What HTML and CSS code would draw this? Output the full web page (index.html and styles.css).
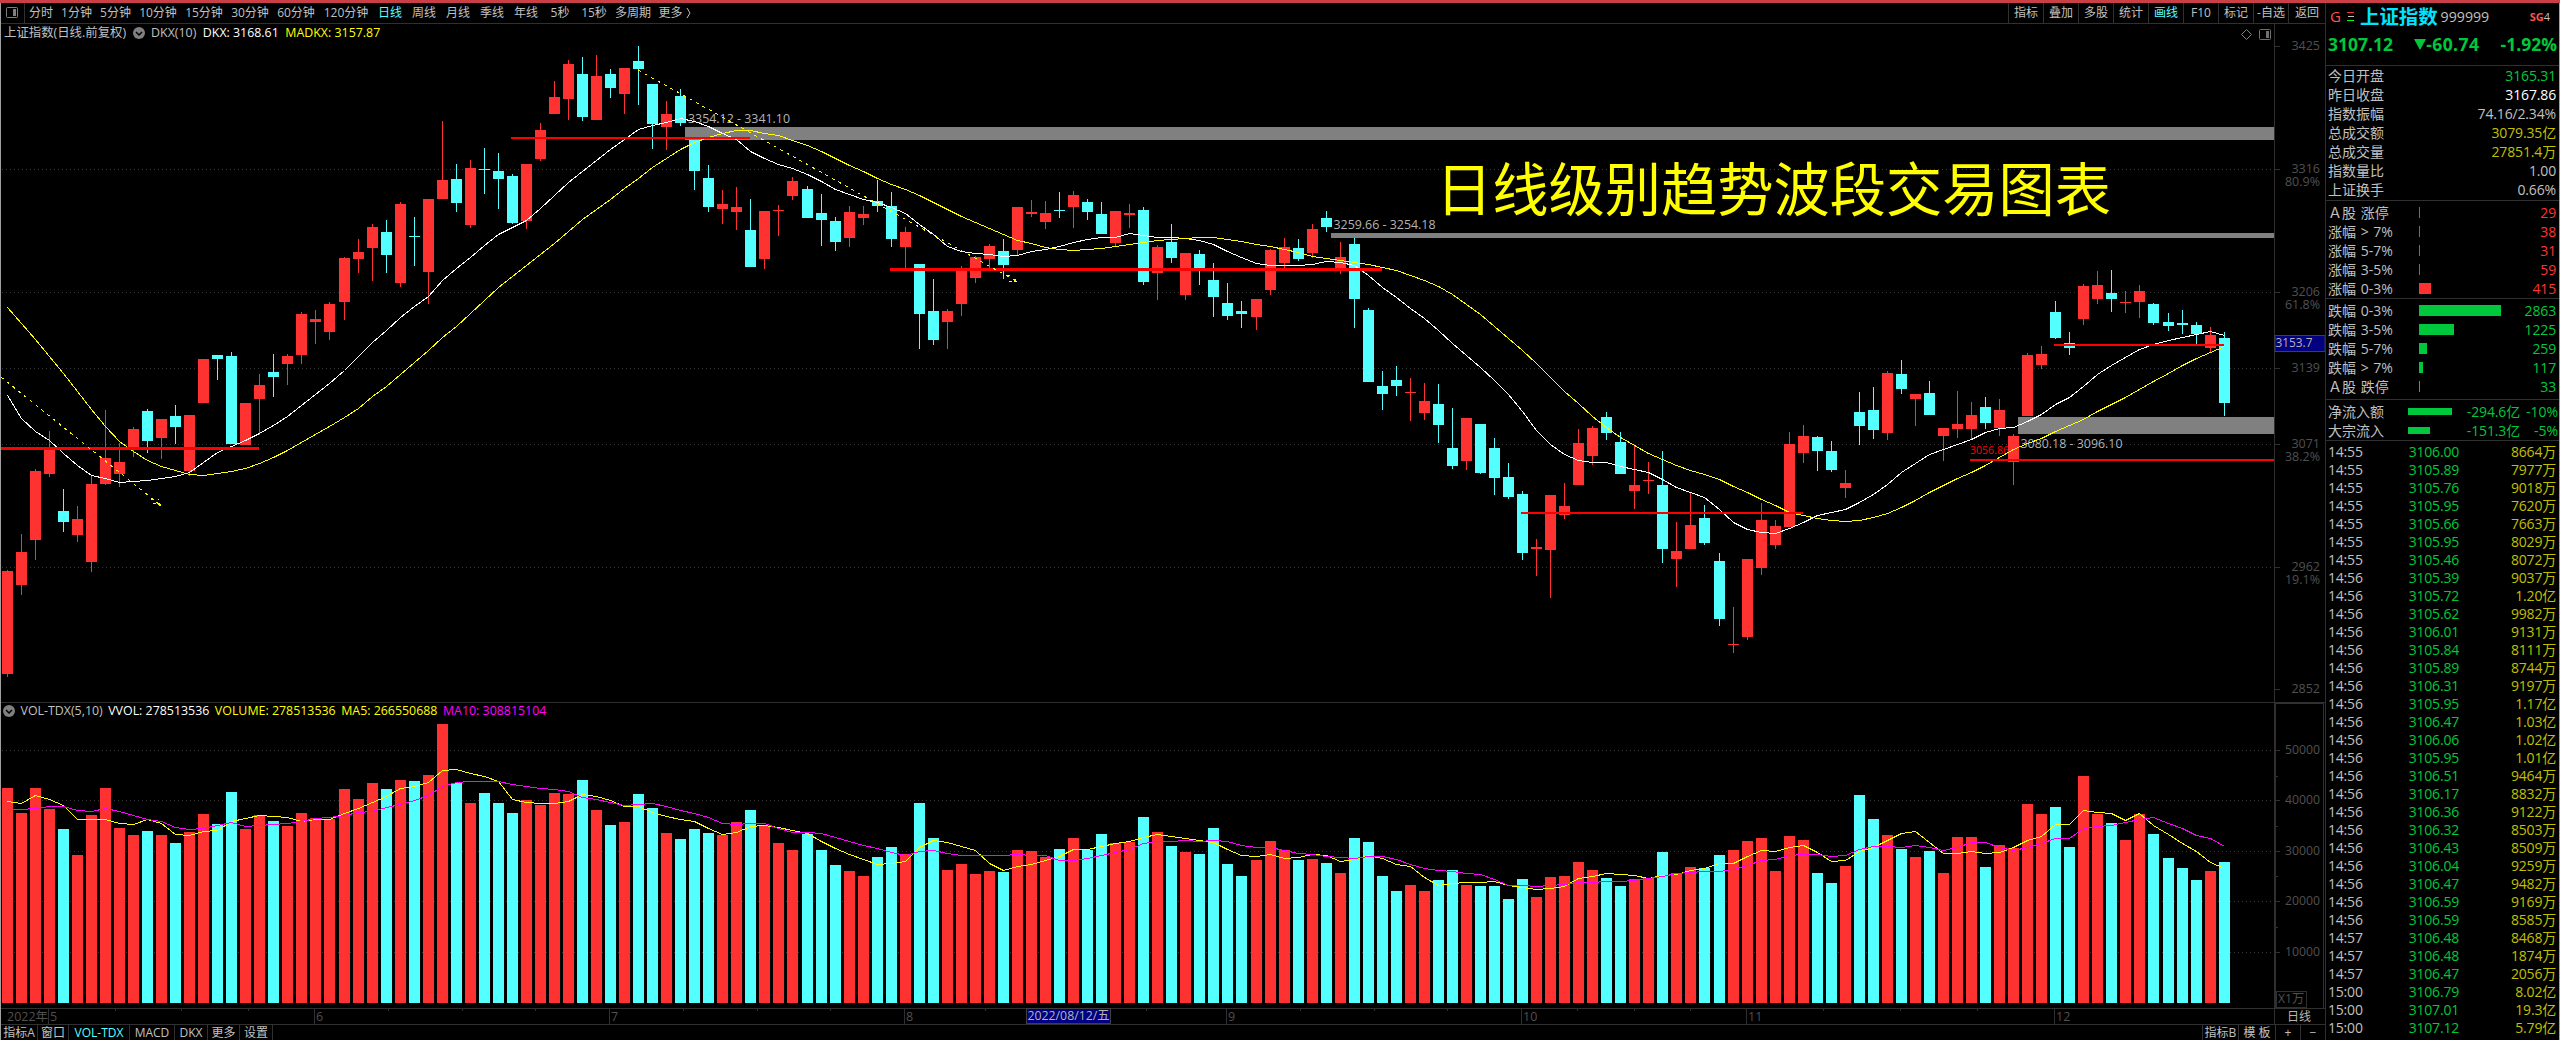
FILE: index.html
```html
<!DOCTYPE html>
<html lang="zh-CN">
<head>
    <meta charset="UTF-8">
    <title>上证指数 999999</title>
    <link rel="stylesheet" href="styles.css">
</head>
<body>
    <div class="main">
        <div class="toolbar">
            <div class="layout-icon">
                <svg width="12" height="12" viewBox="0 0 12 12"><rect x="0.5" y="0.5" width="11" height="10" rx="1" fill="none" stroke="#808080"/><rect x="7" y="2" width="3" height="7" fill="#808080"/></svg>
            </div>
            <div class="periods">
                <span>分时</span>
                <span>1分钟</span>
                <span>5分钟</span>
                <span>10分钟</span>
                <span>15分钟</span>
                <span>30分钟</span>
                <span>60分钟</span>
                <span>120分钟</span>
                <span class="active">日线</span>
                <span>周线</span>
                <span>月线</span>
                <span>季线</span>
                <span>年线</span>
                <span>5秒</span>
                <span>15秒</span>
                <span>多周期</span>
                <span>更多</span>
                <svg width="5" height="12" viewBox="0 0 5 12"><path d="M1 1 L4 6 L1 11" fill="none" stroke="#c0c0c0"/></svg>
            </div>
            <div class="tools">
                <span>指标</span>
                <span>叠加</span>
                <span>多股</span>
                <span>统计</span>
                <span class="active">画线</span>
                <span>F10</span>
                <span>标记</span>
                <span>-自选</span>
                <span>返回</span>
            </div>
        </div>

        <div class="panel price-panel">
            <div class="info">
                <span class="title">上证指数(日线.前复权)</span>
                <svg class="drop" width="12" height="12" viewBox="0 0 12 12"><circle cx="6" cy="6" r="6" fill="#808080"/><path d="M3 5 L6 8 L9 5" fill="none" stroke="#000" stroke-width="1.5"/></svg>
                <span>DKX(10)</span>
                <span class="white">DKX: 3168.61</span>
                <span class="yellow">MADKX: 3157.87</span>
                <div class="info-icons">
                    <svg width="11" height="11" viewBox="0 0 11 11"><path d="M5.5 0.5 L10.5 5.5 L5.5 10.5 L0.5 5.5 Z" fill="none" stroke="#808080"/></svg>
                    <svg width="12" height="11" viewBox="0 0 12 11"><rect x="0.5" y="0.5" width="11" height="10" rx="1" fill="none" stroke="#707070"/><rect x="7" y="2" width="3" height="7" fill="#707070"/></svg>
                </div>
            </div>
            <svg id="price" width="2324" height="661" viewBox="1 41 2324 661"></svg>
        </div>

        <div class="panel vol-panel">
            <div class="info">
                <svg class="drop" width="12" height="12" viewBox="0 0 12 12"><circle cx="6" cy="6" r="6" fill="#808080"/><path d="M3 5 L6 8 L9 5" fill="none" stroke="#000" stroke-width="1.5"/></svg>
                <span>VOL-TDX(5,10)</span>
                <span class="white">VVOL: 278513536</span>
                <span class="yellow">VOLUME: 278513536</span>
                <span class="yellow">MA5: 266550688</span>
                <span class="magenta">MA10: 308815104</span>
            </div>
            <svg id="volume" width="2324" height="305" viewBox="1 720 2324 305"></svg>
        </div>

        <div class="footer">
            <div class="indicators">
                <span>指标A</span>
                <span>窗口</span>
                <span class="active">VOL-TDX</span>
                <span>MACD</span>
                <span>DKX</span>
                <span>更多</span>
                <span>设置</span>
            </div>
            <div class="templates">
                <span>指标B</span>
                <span>模 板</span>
                <span>+</span>
                <span>−</span>
            </div>
        </div>
    </div>

    <div class="side">
        <div class="quote">
            <div class="quote-name">
                <span class="flag">G</span>
                <svg width="8" height="10" viewBox="0 0 8 10"><path d="M0 0.5 H7" stroke="#ff3232"/><path d="M1 4.5 H7" stroke="#c0c0c0"/><path d="M0 8.5 H7" stroke="#00ff00"/></svg>
                <span class="name">上证指数</span>
                <span class="code">999999</span>
                <span class="sg"><b>SG</b>4</span>
            </div>
            <div class="quote-price">
                <span>3107.12</span>
                <span class="change"><svg width="12" height="11" viewBox="0 0 12 11"><path d="M0 0 H12 L6 11 Z" fill="#00c83c"/></svg>-60.74</span>
                <span class="pct">-1.92%</span>
            </div>
        </div>
        <div class="block summary" id="summary"></div>
        <div class="block" id="up"></div>
        <div class="block down" id="down"></div>
        <div class="block flow" id="flow"></div>
        <div class="ticks" id="ticks"></div>
    </div>

    <script src="chart.js"></script>
</body>
</html>
```
FILE: styles.css
```css
* {
    box-sizing: border-box;
}

body {
    margin: 0;
    width: 2560px;
    height: 1040px;
    overflow: hidden;
    display: flex;
    background-color: #000;
    border-top: 3px solid #c84046;
    color: #c0c0c0;
    font-family: "Open Sans", "Noto Sans CJK SC", sans-serif;
    font-size: 12px;
    white-space: nowrap;
}

svg {
    display: block;
    overflow: visible;
}

.active {
    color: #54ffff;
}

.white {
    color: #fff;
}

.yellow {
    color: #ff0;
}

.magenta {
    color: #f0f;
}

.main {
    width: 2325px;
    border-left: 1px solid #a0a0a0;
    display: flex;
    flex-direction: column;
}

/* 顶部工具栏 */
.toolbar {
    height: 21px;
    border-bottom: 1px solid #303030;
    display: flex;
    line-height: 20px;
}

.layout-icon {
    width: 24px;
    padding: 4px 0 0 5px;
    border-right: 1px solid #303030;
}

.periods {
    display: grid;
    grid-template-columns: 32px 39px 39px repeat(4, 46px) 54px repeat(7, 34px) 44px 31px 8px;
    text-align: center;
    align-items: center;
}

.tools {
    display: flex;
    margin-left: auto;
}

.tools span {
    width: 35px;
    border-left: 1px solid #303030;
    text-align: center;
}

.tools span:last-child {
    width: 37px;
}

/* 图表区 */
.price-panel {
    height: 678px;
}

.vol-panel {
    height: 323px;
    border-top: 1px solid #303030;
}

.info {
    width: 2274px;
    height: 17px;
    padding-left: 3px;
    border-right: 1px solid #303030;
    display: flex;
    align-items: center;
    gap: 6.5px;
    font-size: 12.4px;
    line-height: 17px;
}

.vol-panel .info {
    gap: 5.5px;
    padding: 0 0 2px 2px;
}

.info-icons {
    display: flex;
    gap: 7px;
    margin: 3px 3px 0 auto;
}

.grid {
    stroke: #383838;
    stroke-dasharray: 1 3;
}

.frame {
    stroke: #303030;
    fill: none;
}

.axis-text {
    fill: #505050;
    font-size: 12.5px;
}

.mark-text {
    fill: #b4b4b4;
    font-size: 12.5px;
}

.stop-text {
    fill: #f00;
    font-size: 10px;
}

.headline {
    fill: #ff0;
    font-size: 58px;
    font-family: "Noto Sans CJK SC", sans-serif;
}

.rise {
    fill: #ff3232;
}

.fall {
    fill: #54ffff;
}

.gap {
    fill: #808080;
}

.level {
    fill: #f00;
}

.line {
    fill: none;
    stroke-width: 1;
}

.trend {
    fill: none;
    stroke: #ff0;
    stroke-dasharray: 3 4.4;
}

/* 底部 */
.footer {
    height: 15px;
    display: flex;
    line-height: 15px;
    text-align: center;
}

.indicators {
    display: grid;
    grid-template-columns: 37px 31px 61px 45px 33px 32px 33px;
}

.indicators span {
    border-right: 1px solid #303030;
}

.templates {
    display: grid;
    grid-template-columns: 36px 37px 25px 25px;
    margin-left: auto;
}

.templates span {
    border-left: 1px solid #303030;
}

/* 右侧行情 */
.side {
    width: 235px;
    border-left: 1px solid #303030;
    border-right: 1px solid #a0a0a0;
    font-size: 14px;
}

.quote {
    height: 63px;
    border-bottom: 1px solid #303030;
}

.quote-name {
    height: 27px;
    padding: 0 9px 0 4px;
    display: flex;
    align-items: center;
    line-height: 27px;
}

.flag {
    width: 17px;
    color: #ff5050;
    font-size: 15px;
}

.name {
    margin-left: 5px;
    color: #00e4ff;
    font-size: 19.4px;
    font-weight: bold;
}

.code {
    margin-left: 3px;
    font-size: 14.2px;
}

.sg {
    margin-left: auto;
    font-size: 11px;
}

.sg b {
    color: #ff5050;
}

.quote-price {
    padding: 0 2px;
    display: flex;
    justify-content: space-between;
    color: #00c83c;
    font-size: 17.5px;
    font-weight: bold;
    line-height: 28px;
}

.change {
    display: flex;
    align-items: center;
    letter-spacing: 0.4px;
}

.block {
    padding: 2px 3px 0 2px;
    border-bottom: 1px solid #303030;
}

.summary {
    padding-top: 0;
    padding-bottom: 1px;
}

.down {
    padding-bottom: 3px;
}

.row {
    height: 19px;
    display: flex;
    align-items: center;
    line-height: 19px;
}

.row .label {
    width: 91px;
    word-spacing: 1px;
}

.row .bar {
    height: 11px;
}

.row .value {
    margin-left: auto;
    letter-spacing: -0.15px;
}

.flow {
    padding-right: 1px;
}

.flow .label {
    width: 80px;
}

.flow .bar {
    height: 7px;
}

.flow .rate {
    width: 38px;
    text-align: right;
}

.up-color {
    color: #ff3232;
}

.down-color {
    color: #00c83c;
}

.amount-color {
    color: #c0c000;
}

.up-bar {
    background-color: #ff3232;
}

.down-bar {
    background-color: #00c83c;
}

.ticks {
    padding: 2px 3px 0 2px;
}

.tick {
    height: 18px;
    display: grid;
    grid-template-columns: 60px 71px 1fr;
    line-height: 18px;
    letter-spacing: -0.2px;
}

.tick span + span {
    text-align: right;
}
```
FILE: chart.js
```js
// [涨跌, 最高, 实体上沿, 实体下沿, 最低]
var candles = [
    [1,570,571,674,677],[1,534,552,585,595],[1,469,471,540,560],[1,431,449,474,477],[0,489,511,522,532],
    [1,506,519,535,542],[1,476,484,562,572],[1,410,458,484,485],[1,443,462,474,487],[1,427,429,448,457],
    [0,409,411,441,453],[1,419,419,438,459],[0,405,416,427,444],[1,415,415,471,476],[1,359,359,403,403],
    [0,355,355,359,380],[0,352,356,444,444],[1,403,403,445,445],[1,374,385,399,435],[0,354,372,377,397],
    [1,354,356,364,385],[1,312,314,355,364],[1,310,319,322,344],[1,302,304,332,340],[1,257,258,302,320],
    [1,239,252,259,273],[1,224,227,248,281],[0,220,232,255,273],[1,202,204,283,287],[0,217,236,237,266],
    [1,199,199,272,304],[1,121,180,199,199],[0,164,179,203,212],[1,160,168,225,228],[0,148,169,170,194],
    [0,153,171,179,209],[0,174,176,223,224],[1,164,164,221,229],[1,123,130,159,161],[1,81,97,114,114],
    [1,60,64,99,120],[0,57,74,117,121],[1,55,76,120,120],[0,69,74,88,98],[1,68,68,94,114],
    [0,46,61,69,105],[0,84,84,124,149],[1,101,114,127,150],[0,89,96,123,126],[0,140,140,171,190],
    [0,165,178,207,212],[1,190,204,209,224],[1,187,207,212,230],[0,199,230,267,267],[1,211,211,259,269],
    [1,205,210,211,236],[1,177,181,196,200],[0,186,189,218,218],[0,194,213,220,246],[0,217,221,242,251],
    [1,206,212,238,247],[1,206,214,218,225],[0,180,201,206,212],[0,192,206,239,247],[1,227,232,247,269],
    [0,264,264,314,349],[0,279,311,340,345],[1,309,311,322,349],[1,266,270,304,316],[1,256,257,278,283],
    [1,244,246,259,269],[0,239,251,265,279],[1,207,207,250,256],[1,200,212,214,217],[1,201,213,222,229],
    [0,192,210,211,218],[1,191,195,207,228],[0,199,202,212,220],[0,202,214,234,234],[1,211,211,243,246],
    [1,204,213,215,228],[0,207,210,282,285],[1,245,247,273,300],[0,224,242,258,263],[1,253,253,295,300],
    [0,250,254,268,285],[0,263,280,297,317],[0,283,303,316,320],[0,301,311,314,328],[1,299,299,317,330],
    [1,249,250,290,295],[1,238,247,263,269],[0,239,248,259,261],[1,224,229,253,258],[0,211,218,227,232],
    [1,242,257,269,274],[0,238,244,299,328],[0,308,310,382,382],[0,371,386,394,410],[0,366,380,386,396],
    [1,378,392,393,421],[1,383,401,413,420],[0,384,404,425,443],[0,408,448,466,469],[1,418,418,461,470],
    [0,424,424,473,474],[0,438,448,478,495],[0,463,477,497,499],[0,491,494,553,560],[1,539,547,549,576],
    [1,495,495,550,598],[1,483,506,515,519],[1,429,443,485,485],[1,426,428,456,465],[0,412,417,433,440],
    [0,432,442,474,474],[1,445,485,491,509],[1,462,480,481,494],[0,451,485,549,563],[1,522,551,559,587],
    [1,493,525,549,549],[0,505,518,543,545],[0,553,561,619,626],[1,607,644,645,653],[1,559,559,637,640],
    [1,503,520,568,575],[1,520,526,545,549],[1,432,444,527,527],[1,425,436,453,463],[0,436,437,451,471],
    [0,441,451,470,472],[1,470,483,488,498],[0,392,412,426,445],[0,387,410,430,439],[1,371,373,433,440],
    [0,360,374,389,394],[1,394,394,399,426],[0,381,393,415,415],[1,428,428,436,461],[1,391,424,429,438],
    [1,402,415,429,439],[0,397,407,423,429],[1,399,410,428,436],[1,434,436,462,485],[1,353,355,416,416],
    [1,346,354,365,369],[0,301,312,338,339],[0,332,343,348,355],[1,284,286,319,325],[1,271,285,299,304],
    [0,270,293,299,312],[1,291,302,303,313],[1,285,291,302,318],[0,303,304,323,325],[0,313,322,326,331],
    [0,310,323,325,334],[0,322,325,334,344],[1,327,335,348,353],[0,332,338,403,416]
];

var dkx = [395,418,431,440,453,465,475,478,482,481,480,478,476,472,462,452,446,440,433,425,416,405,394,383,370,356,342,330,317,306,
    296,280,268,257,245,234,227,220,208,195,182,171,160,149,139,129,125,122,118,121,126,133,139,151,158,164,168,174,181,189,
    194,199,202,207,213,224,234,246,251,253,254,256,255,251,249,246,242,239,237,237,233,235,237,237,238,240,244,251,257,263,
    265,265,265,264,261,262,265,275,287,297,308,318,330,343,355,367,380,394,411,430,444,454,460,462,462,466,469,472,479,487,
    492,497,509,522,529,532,533,528,522,515,512,509,502,494,484,472,463,454,449,444,439,432,428,427,421,414,404,397,386,374,
    365,357,349,344,340,337,334,331,335];

var madkx = [307,323,339,356,373,391,409,426,441,451,460,466,470,474,475,473,471,468,463,457,450,442,434,426,417,408,396,386,374,362,
    350,337,326,313,300,287,276,265,254,243,231,219,209,199,188,178,167,158,149,142,137,133,130,130,133,135,140,145,151,158,
    165,171,178,184,189,195,202,209,216,222,228,234,240,243,247,249,250,249,248,246,244,242,240,239,238,237,237,239,241,244,
    246,249,252,256,258,260,262,264,267,270,275,280,286,294,304,314,326,338,350,363,377,391,403,416,427,437,445,453,459,465,
    470,474,479,486,492,499,505,512,515,518,520,521,520,517,513,507,500,492,485,478,472,465,457,449,443,438,431,425,419,411,
    404,397,389,381,373,365,358,352,346];

var volumes = [215,190,215,194,174,148,188,215,175,168,172,168,160,171,189,179,211,174,188,182,177,190,185,184,214,204,220,214,223,222,
    228,279,220,200,210,200,190,203,198,210,209,223,193,178,181,209,195,170,164,174,170,168,181,193,177,160,153,169,153,138,
    132,127,146,156,149,200,165,133,139,129,132,131,153,152,146,154,165,153,169,160,161,186,171,157,151,149,175,139,127,143,
    162,153,143,144,140,130,165,161,127,112,118,112,123,133,118,117,117,104,124,106,126,127,141,133,125,117,124,125,151,130,
    136,135,148,153,162,165,132,167,163,130,120,137,208,184,168,154,146,152,130,166,166,136,158,155,199,189,196,156,227,189,
    180,163,189,169,145,135,123,132,141];

function barX(i) {
    return 2 + Math.floor(i * 14.0308 + 0.27);
}

function rect(x, y, w, h, cls) {
    return '<rect x="' + x + '" y="' + y + '" width="' + w + '" height="' + h + '" class="' + cls + '"/>';
}

function hline(x1, x2, y, cls) {
    return '<path d="M' + x1 + ' ' + (y + 0.5) + ' H' + x2 + '" class="' + cls + '"/>';
}

function vline(x, y1, y2) {
    return '<path d="M' + (x + 0.5) + ' ' + y1 + ' V' + y2 + '" class="frame"/>';
}

function text(x, y, str, cls, len, anchor) {
    return '<text x="' + x + '" y="' + y + '" class="' + cls + '"' +
        (len ? ' textLength="' + len + '" lengthAdjust="spacingAndGlyphs"' : '') +
        (anchor ? ' text-anchor="' + anchor + '"' : '') + '>' + str + '</text>';
}

function curve(values, color) {
    var points = values.map(function(y, i) {
        return (barX(i) + 5.5) + ',' + (y + 0.5);
    });
    return '<polyline points="' + points.join(' ') + '" class="line" stroke="' + color + '" shape-rendering="crispEdges"/>';
}

function average(values, n, start) {
    return values.map(function(v, i) {
        if (i < n - 1) return 1003 - start[i];
        var sum = 0;
        for (var k = 0; k < n; k++) sum += values[i - k];
        return Math.round(1003 - sum / n);
    });
}

function drawPrice() {
    var out = '';
    [169, 292, 368, 444, 567].forEach(function(y) {
        out += hline(2, 2274, y, 'grid');
    });
    [46, 169, 292, 368, 444, 567, 689].forEach(function(y) {
        out += hline(2275, 2280, y, 'frame');
    });
    out += vline(2274, 41, 702);

    // 缺口
    out += rect(685, 127, 1589, 13, 'gap');
    out += rect(1331, 233, 943, 5, 'gap');
    out += rect(2018, 417, 256, 17, 'gap');
    out += text(688, 123, '3354.12 - 3341.10', 'mark-text', 102);
    out += text(1333.5, 229, '3259.66 - 3254.18', 'mark-text', 102);
    out += text(2020.5, 448, '3080.18 - 3096.10', 'mark-text', 102);
    out += text(1970, 454, '3056.86', 'stop-text', 39);

    candles.forEach(function(c, i) {
        var x = barX(i), cls = c[0] ? 'rise' : 'fall';
        out += rect(x + 5, c[1], 1, c[4] - c[1], cls);
        out += rect(x, c[2], 11, c[3] - c[2], cls);
    });

    out += curve(dkx, '#fff');
    out += curve(madkx, '#ff0');

    out += rect(1, 447, 258, 3, 'level');
    out += rect(511, 137, 239, 2, 'level');
    out += rect(890, 268, 492, 3, 'level');
    out += rect(1521, 512, 282, 2, 'level');
    out += rect(2054, 344, 170, 2, 'level');
    out += rect(1970, 459, 304, 2, 'level');

    out += '<g class="trend" shape-rendering="crispEdges">' +
        '<path d="M1 377 L160 505"/><path d="M151 499.5 H159 M153 503.5 H160"/>' +
        '<path d="M638 70 L1016 281"/><path d="M1007 275.5 H1013 M1009 281.5 H1017"/></g>';
    out += '<path d="M158 503 h2 v1 h1 v2 h-2 v-1 h-1 z M1014 279 h2 v2 h1 v1 h-3 z" fill="#ff0"/>';

    out += text(1436, 211, '日线级别趋势波段交易图表', 'headline', 675);

    [[50, '3425'], [173, '3316'], [186, '80.9%'], [296, '3206'], [309, '61.8%'], [372, '3139'],
     [448, '3071'], [461, '38.2%'], [571, '2962'], [584, '19.1%'], [693, '2852']].forEach(function(l) {
        out += text(2320, l[0], l[1], 'axis-text', 0, 'end');
    });
    out += '<rect x="2275" y="335.5" width="50" height="16" fill="#000080" stroke="#404040"/>';
    out += text(2275.5, 347, '3153.7', 'mark-text', 37);
    document.getElementById('price').innerHTML = out;
}

function drawVolume() {
    var out = '';
    [[750, 50000], [800, 40000], [851, 30000], [901, 20000], [952, 10000]].forEach(function(g) {
        out += hline(2, 2274, g[0], 'grid');
        out += hline(2276, 2280, g[0], 'frame');
        out += text(2320, g[0] + 4, g[1], 'axis-text', 35, 'end');
    });
    [776, 826, 876, 927].forEach(function(y) {
        out += hline(2276, 2278, y, 'frame');
    });
    volumes.forEach(function(h, i) {
        out += rect(barX(i), 1003 - h, 11, h, candles[i][0] ? 'rise' : 'fall');
    });
    out += curve(average(volumes, 5, [202, 200, 208, 204]), '#ff0');
    out += curve(average(volumes, 10, [194, 194, 195, 197, 197, 193, 192, 195, 192]), '#f0f');

    out += vline(2274, 720, 1025) + vline(2275, 703, 1008) + vline(2323, 703, 1008) + hline(2275, 2324, 703, 'frame');
    out += '<rect x="2276.5" y="991.5" width="30" height="16" class="frame"/>';
    out += text(2278, 1003, 'X1万', 'axis-text', 26);
    out += hline(1, 2325, 1008, 'frame') + hline(1, 2325, 1024, 'frame');

    out += text(7, 1021, '2022年', 'axis-text', 41);
    [[48, 5], [314, 6], [609, 7], [904, 8], [1226, 9], [1521, 10], [1746, 11], [2054, 12]].forEach(function(m) {
        out += vline(m[0], 1008, 1024) + text(m[0] + 2, 1021, m[1], 'axis-text');
    });
    [115, 181, 248, 388, 462, 535, 683, 757, 830, 985, 1146, 1300, 1374, 1447, 1577, 1634, 1690, 1823, 1900, 1977].forEach(function(x) {
        out += vline(x, 1008, 1011);
    });
    out += '<rect x="1026.5" y="1008.5" width="84" height="15" fill="#000080" stroke="#404040"/>';
    out += text(1027.5, 1020, '2022/08/12/五', 'mark-text', 82);
    out += text(2287, 1021, '日线', 'mark-text', 24);
    document.getElementById('volume').innerHTML = out;
}

function row(label, value, color, bar) {
    return '<div class="row"><span class="label">' + label + '</span>' +
        (bar ? '<span class="bar ' + (color === 'up-color' ? 'up-bar' : 'down-bar') + '" style="width:' + bar + 'px"></span>' : '') +
        '<span class="value ' + color + '">' + value + '</span></div>';
}

function fill(id, rows) {
    document.getElementById(id).innerHTML = rows.join('');
}

function drawSide() {
    fill('summary', [
        row('今日开盘', '3165.31', 'down-color'),
        row('昨日收盘', '3167.86', 'white'),
        row('指数振幅', '74.16/2.34%', ''),
        row('总成交额', '3079.35亿', 'amount-color'),
        row('总成交量', '27851.4万', 'amount-color'),
        row('指数量比', '1.00', ''),
        row('上证换手', '0.66%', '')
    ]);
    fill('up', [
        row('Ａ股 涨停', '29', 'up-color', 1),
        row('涨幅 &gt; 7%', '38', 'up-color', 1),
        row('涨幅 5-7%', '31', 'up-color', 1),
        row('涨幅 3-5%', '59', 'up-color', 1),
        row('涨幅 0-3%', '415', 'up-color', 12)
    ]);
    fill('down', [
        row('跌幅 0-3%', '2863', 'down-color', 82),
        row('跌幅 3-5%', '1225', 'down-color', 35),
        row('跌幅 5-7%', '259', 'down-color', 8),
        row('跌幅 &gt; 7%', '117', 'down-color', 4),
        row('Ａ股 跌停', '33', 'down-color', 1)
    ]);
    fill('flow', [['净流入额', 44, '-294.6亿', '-10%'], ['大宗流入', 22, '-151.3亿', '-5%']].map(function(f) {
        return '<div class="row"><span class="label">' + f[0] + '</span>' +
            '<span class="bar down-bar" style="width:' + f[1] + 'px"></span>' +
            '<span class="value down-color">' + f[2] + '</span>' +
            '<span class="rate down-color">' + f[3] + '</span></div>';
    }));

    var ticks = [
        '14:55 3106.00 8664万', '14:55 3105.89 7977万', '14:55 3105.76 9018万', '14:55 3105.95 7620万',
        '14:55 3105.66 7663万', '14:55 3105.95 8029万', '14:55 3105.46 8072万', '14:56 3105.39 9037万',
        '14:56 3105.72 1.20亿', '14:56 3105.62 9982万', '14:56 3106.01 9131万', '14:56 3105.84 8111万',
        '14:56 3105.89 8744万', '14:56 3106.31 9197万', '14:56 3105.95 1.17亿', '14:56 3106.47 1.03亿',
        '14:56 3106.06 1.02亿', '14:56 3105.95 1.01亿', '14:56 3106.51 9464万', '14:56 3106.17 8832万',
        '14:56 3106.36 9122万', '14:56 3106.32 8503万', '14:56 3106.43 8509万', '14:56 3106.04 9259万',
        '14:56 3106.47 9482万', '14:56 3106.59 9169万', '14:56 3106.59 8585万', '14:57 3106.48 8468万',
        '14:57 3106.48 1874万', '14:57 3106.47 2056万', '15:00 3106.79 8.02亿', '15:00 3107.01 19.3亿',
        '15:00 3107.12 5.79亿'
    ];
    fill('ticks', ticks.map(function(t) {
        var p = t.split(' ');
        return '<div class="tick"><span>' + p[0] + '</span><span class="down-color">' + p[1] +
            '</span><span class="amount-color">' + p[2] + '</span></div>';
    }));
}

drawPrice();
drawVolume();
drawSide();
```
